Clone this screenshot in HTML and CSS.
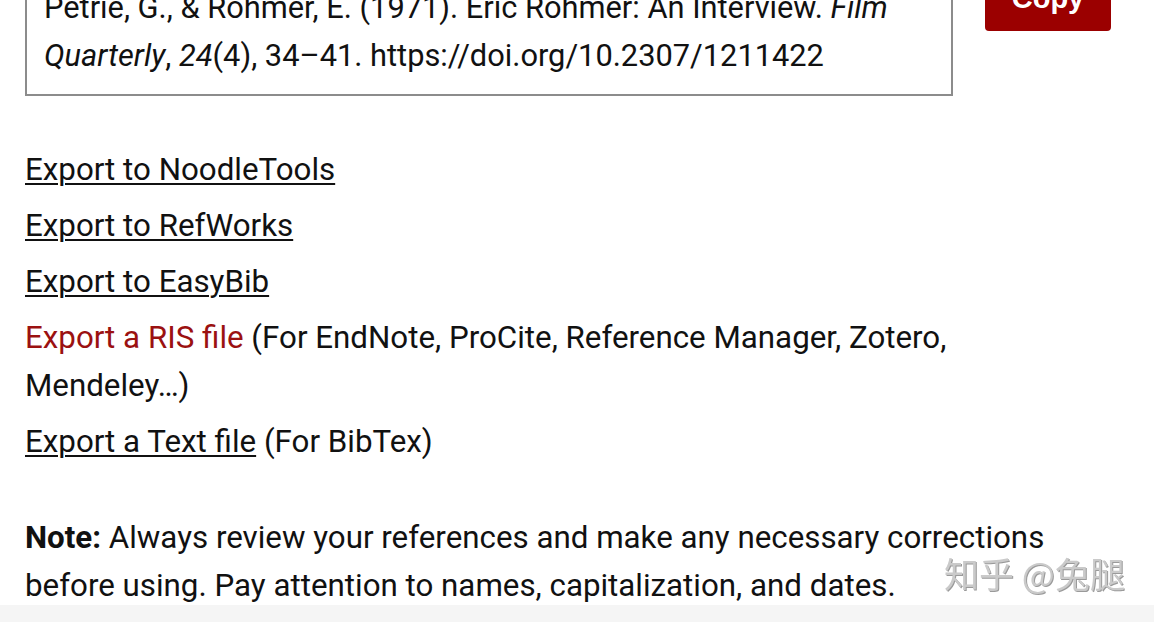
FILE: index.html
```html
<!DOCTYPE html>
<html lang="en">
<head>
<meta charset="utf-8">
<title>Cite</title>
<link rel="stylesheet" href="styles.css">
</head>
<body>
<div class="page">
  <div class="cite-row">
    <div class="cite-box">Petrie, G., &amp; Rohmer, E. (1971). Eric Rohmer: An Interview. <i>Film Quarterly</i>, <i>24</i>(4), 34–41. https://doi.org/10.2307/1211422</div>
    <button class="copy" type="button">Copy</button>
  </div>
  <ul class="exports">
    <li><a class="ext" href="#">Export to NoodleTools</a></li>
    <li><a class="ext" href="#">Export to RefWorks</a></li>
    <li><a class="ext" href="#">Export to EasyBib</a></li>
    <li><a class="ext ris" href="#">Export a RIS file</a> (For EndNote, ProCite, Reference Manager, Zotero, Mendeley…)</li>
    <li><a class="ext" href="#">Export a Text file</a> (For BibTex)</li>
  </ul>
  <p class="note"><b>Note:</b> Always review your references and make any necessary corrections before using. Pay attention to names, capitalization, and dates.</p>
</div>
<div class="watermark">知乎 @兔腿</div>
<div class="bottom-bar"></div>
</body>
</html>
```
FILE: styles.css
```css
html, body {
  margin: 0;
  padding: 0;
  background: #fff;
}
body {
  font-family: Roboto, "Liberation Sans", sans-serif;
  font-size: 31.3px;
  line-height: 48px;
  color: #111;
  overflow: hidden;
}
.page {
  margin: -35px 0 0 25px;
  width: 1086px;
}
.cite-row {
  display: flex;
  align-items: flex-start;
  gap: 32px;
}
.cite-box {
  flex: 0 0 928px;
  box-sizing: border-box;
  border: 2px solid #8c8c8c;
  padding: 17px 17px 14px;
  font-size: 30.8px;
}
.copy {
  box-sizing: border-box;
  width: 126px;
  height: 66px;
  border: 0;
  border-radius: 4px;
  background: #9b0000;
  color: #fff;
  font-family: "Liberation Sans", Arial, sans-serif;
  font-weight: bold;
  font-size: 29px;
  padding: 0;
}
.exports {
  list-style: none;
  margin: 50px 0 0;
  padding: 0;
  display: flex;
  flex-direction: column;
  gap: 8px;
}
.ext {
  color: #111;
  text-decoration: underline;
  text-underline-offset: 3px;
  text-decoration-thickness: 2px;
}
.ris {
  color: #9b1111;
  text-decoration: none;
}
.note {
  margin: 48px 0 0;
}
.watermark {
  position: fixed;
  left: 944px;
  top: 549px;
  font-family: "Noto Sans CJK SC", sans-serif;
  font-size: 35px;
  line-height: 48px;
  color: #cacaca;
  text-shadow: 1px 1px 0 #9a9a9a;
}
.bottom-bar {
  position: fixed;
  left: 0;
  right: 0;
  bottom: 0;
  height: 17px;
  background: #f5f5f5;
}
```
